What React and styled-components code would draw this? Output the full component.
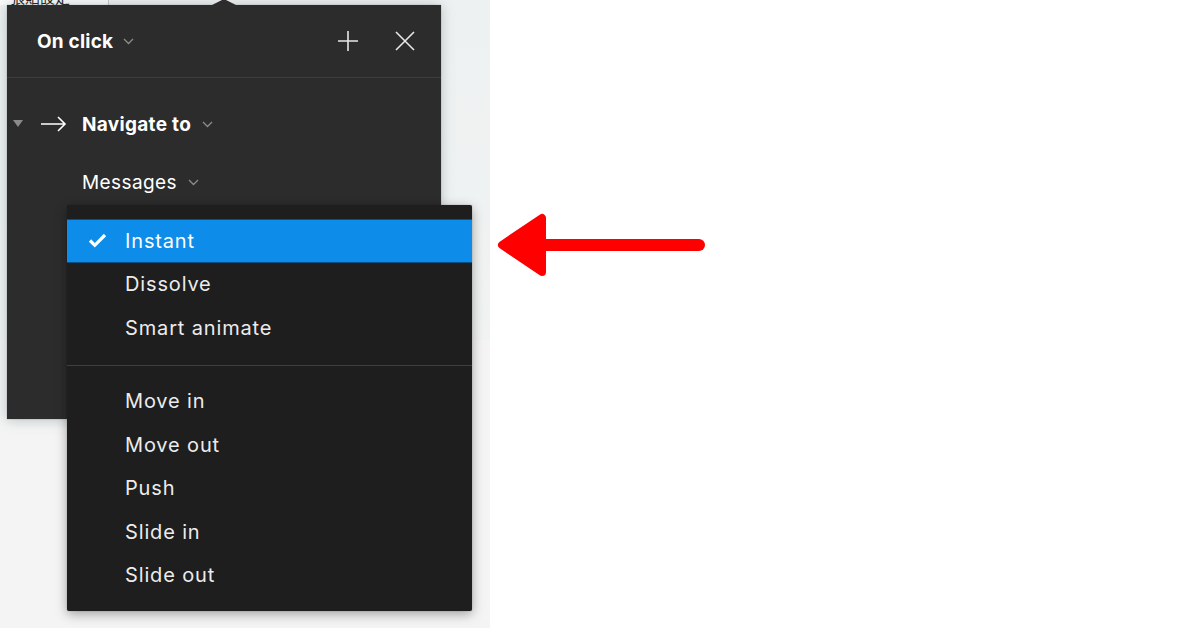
import React from 'react';
import styled, { createGlobalStyle } from 'styled-components';

const GlobalStyle = createGlobalStyle`
  html, body {
    margin: 0;
    padding: 0;
    background: #ffffff;
  }
  body {
    font-family: Inter, "Noto Sans", "Noto Sans CJK TC", sans-serif;
    -webkit-font-smoothing: antialiased;
  }
`;

const Page = styled.div`
  display: flex;
  width: 1200px;
  height: 628px;
  overflow: hidden;
  background: #ffffff;
`;

const Canvas = styled.div`
  position: relative;
  width: 490px;
  height: 628px;
  flex-shrink: 0;
  background: linear-gradient(180deg, #eef1f1 0px, #f1f3f3 340px, #f4f4f4 341px, #f4f4f4 100%);
  padding: 5px 0 0 7px;
  box-sizing: border-box;
`;

const TopStrip = styled.div`
  position: absolute;
  top: 0;
  left: 0;
  width: 108px;
  height: 5px;
  overflow: hidden;
  background: #fafafa;
  border-right: 1px solid #c8c8c8;
`;

const CutLabel = styled.div`
  margin: -11px 0 0 10px;
  font-size: 15px;
  line-height: 16px;
  color: #222;
  font-family: "Noto Sans CJK TC", sans-serif;
`;

const Panel = styled.div`
  position: relative;
  width: 434px;
  height: 414px;
  background: #2c2c2c;
  box-shadow: 0 1px 12px rgba(70, 100, 100, 0.35), 0 0 1px rgba(0, 0, 0, 0.4);
  color: #ffffff;

  &::before {
    content: '';
    position: absolute;
    top: -6px;
    left: 203px;
    border-left: 14px solid transparent;
    border-right: 14px solid transparent;
    border-bottom: 7px solid #2c2c2c;
  }
`;

const Header = styled.div`
  display: flex;
  align-items: center;
  height: 72px;
  padding: 0 25px 0 30px;
  border-bottom: 1px solid #3d3d3d;
`;

const Title = styled.div`
  display: flex;
  align-items: center;
  gap: 10px;
  font-size: 19px;
  font-weight: 700;
  letter-spacing: 0.2px;
  flex: 1;
`;

const HeaderActions = styled.div`
  display: flex;
  align-items: center;
  gap: 35px;
`;

const Body = styled.div`
  display: flex;
  flex-direction: column;
  gap: 18px;
  padding-top: 26px;
`;

const ActionRow = styled.div`
  display: flex;
  align-items: center;
  height: 40px;
  padding-left: ${p => p.$indent}px;
`;

const Caret = styled.svg`
  width: 10px;
  height: 8px;
  margin-right: 18px;
`;

const ArrowIcon = styled.svg`
  width: 26px;
  height: 16px;
  margin-right: 15px;
`;

const RowLabel = styled.span`
  display: flex;
  align-items: center;
  gap: 11px;
  font-size: 19px;
  font-weight: ${p => (p.$bold ? 700 : 400)};
  letter-spacing: ${p => (p.$bold ? 0.3 : 0.4)}px;
  color: #ffffff;
`;

const Menu = styled.div`
  position: absolute;
  top: 205px;
  left: 67px;
  width: 405px;
  padding: 14px 0;
  background: #1e1e1e;
  border-radius: 2px;
  box-shadow: 0 3px 12px rgba(0, 0, 0, 0.35), 0 0 1px rgba(0, 0, 0, 0.5);
`;

const MenuItem = styled.div`
  display: flex;
  align-items: center;
  height: 43.5px;
  padding-left: 21px;
  font-size: 20px;
  letter-spacing: 0.85px;
  color: ${p => (p.$active ? '#ffffff' : '#ececec')};
  background: ${p => (p.$active ? '#0d8ce9' : 'transparent')};
  box-shadow: ${p => (p.$active ? 'inset 0 1px 0 #0a4f86, inset 0 -1px 0 #0a4f86' : 'none')};
`;

const CheckSlot = styled.span`
  display: flex;
  align-items: center;
  width: 37px;
`;

const MenuDivider = styled.div`
  height: 1px;
  background: #3f3f3f;
  margin: 15px 0 14px;
`;

const Annotation = styled.div`
  padding: 212px 0 0 6px;
`;

const Chevron = ({ color = '#8c8c8c' }) => (
  <svg width="11" height="7" viewBox="0 0 11 7" fill="none">
    <path d="M1 1l4.5 4.5L10 1" stroke={color} strokeWidth="1.3" />
  </svg>
);

const PlusIcon = () => (
  <svg width="22" height="22" viewBox="0 0 22 22" fill="none">
    <path d="M11 1v20M1 11h20" stroke="#e8e8e8" strokeWidth="1.6" />
  </svg>
);

const CloseIcon = () => (
  <svg width="22" height="22" viewBox="0 0 22 22" fill="none">
    <path d="M2 2l18 18M20 2L2 20" stroke="#e8e8e8" strokeWidth="1.6" />
  </svg>
);

const CheckIcon = () => (
  <svg width="19" height="15" viewBox="0 0 19 15" fill="none">
    <path d="M2 7.5l4.8 4.8L17 2" stroke="#ffffff" strokeWidth="3.2" />
  </svg>
);

const transitions = ['Instant', 'Dissolve', 'Smart animate'];
const directional = ['Move in', 'Move out', 'Push', 'Slide in', 'Slide out'];

export default function App() {
  return (
    <Page>
      <GlobalStyle />
      <Canvas>
        <TopStrip>
          <CutLabel>張貼設定</CutLabel>
        </TopStrip>
        <Panel>
          <Header>
            <Title>
              On click <Chevron />
            </Title>
            <HeaderActions>
              <PlusIcon />
              <CloseIcon />
            </HeaderActions>
          </Header>
          <Body>
            <ActionRow $indent={6}>
              <Caret viewBox="0 0 10 8">
                <path d="M0 0h10L5 7z" fill="#8a8a8a" />
              </Caret>
              <ArrowIcon viewBox="0 0 26 16" fill="none">
                <path d="M0 8h24M17 1l7 7-7 7" stroke="#ffffff" strokeWidth="1.6" />
              </ArrowIcon>
              <RowLabel $bold>
                Navigate to <Chevron />
              </RowLabel>
            </ActionRow>
            <ActionRow $indent={75}>
              <RowLabel>
                Messages <Chevron />
              </RowLabel>
            </ActionRow>
          </Body>
        </Panel>
        <Menu>
          {transitions.map((name, i) => (
            <MenuItem key={name} $active={i === 0}>
              <CheckSlot>{i === 0 ? <CheckIcon /> : null}</CheckSlot>
              {name}
            </MenuItem>
          ))}
          <MenuDivider />
          {directional.map(name => (
            <MenuItem key={name}>
              <CheckSlot />
              {name}
            </MenuItem>
          ))}
        </Menu>
      </Canvas>
      <Annotation>
        <svg width="212" height="66" viewBox="0 0 212 66" fill="none">
          <path d="M6 33L46 6V60Z" fill="#fe0000" stroke="#fe0000" strokeWidth="8" strokeLinejoin="round" />
          <path d="M46 33H203" stroke="#fe0000" strokeWidth="12" strokeLinecap="round" />
        </svg>
      </Annotation>
    </Page>
  );
}
